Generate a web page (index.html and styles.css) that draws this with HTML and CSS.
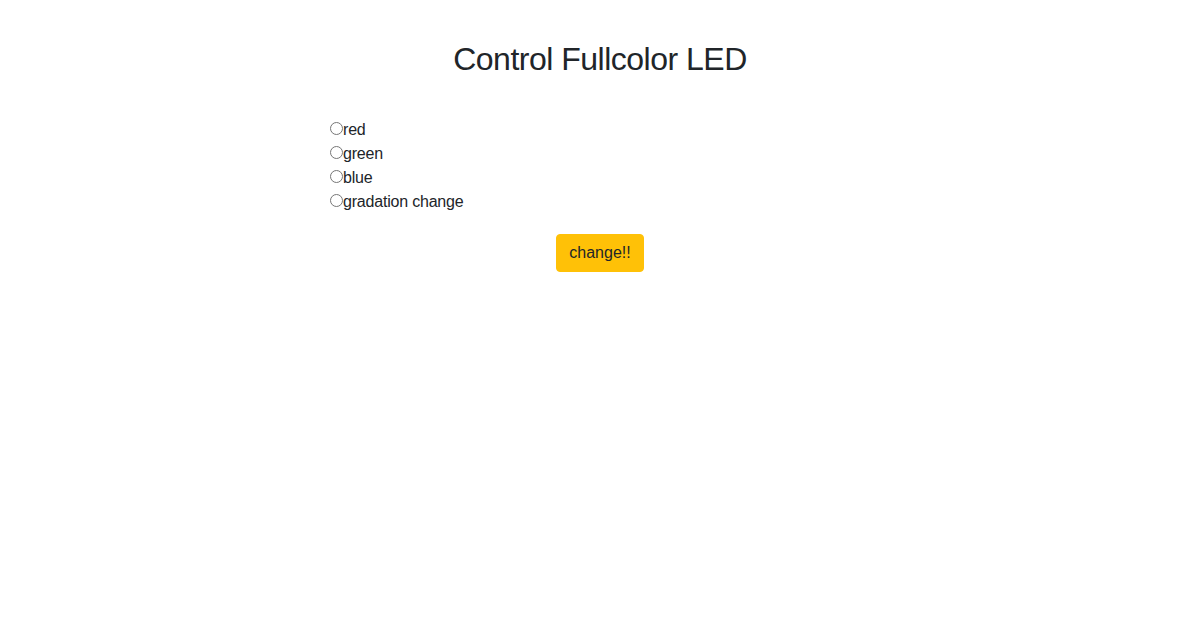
FILE: index.html
```html
<!DOCTYPE html>
<html>
<head>
<meta charset="utf-8">
<link rel="stylesheet" href="styles.css">
</head>
<body>
<main class="page">
  <h2 class="title">Control Fullcolor LED</h2>
  <form class="form">
    <div class="options">
      <label class="option"><input type="radio" name="color" value="red">red</label>
      <label class="option"><input type="radio" name="color" value="green">green</label>
      <label class="option"><input type="radio" name="color" value="blue">blue</label>
      <label class="option"><input type="radio" name="color" value="gradation">gradation change</label>
    </div>
    <div class="actions">
      <button type="button" class="btn">change!!</button>
    </div>
  </form>
</main>
</body>
</html>
```

FILE: styles.css
```css
html, body {
  margin: 0;
  padding: 0;
  background: #fff;
}
body {
  font-family: "Liberation Sans", Arial, sans-serif;
  font-size: 16px;
  line-height: 1.5;
  color: #212529;
}
.page {
  display: flex;
  flex-direction: column;
  align-items: center;
}
.title {
  margin: 40px 0 0;
  font-size: 32px;
  font-weight: 400;
  line-height: 1.2;
  letter-spacing: -0.5px;
}
.form {
  width: 540px;
  margin-top: 40px;
}
.options {
  display: flex;
  flex-direction: column;
}
.option {
  display: block;
  line-height: 24px;
  letter-spacing: -0.2px;
}
.option input {
  margin: 0;
  width: 13px;
  height: 13px;
}
.actions {
  display: flex;
  justify-content: center;
  margin-top: 20px;
}
.btn {
  font-family: inherit;
  font-size: 16px;
  line-height: 1.5;
  color: #212529;
  background: #ffc107;
  border: 1px solid #ffc107;
  border-radius: 4px;
  padding: 6px 12px;
  cursor: pointer;
}
```
